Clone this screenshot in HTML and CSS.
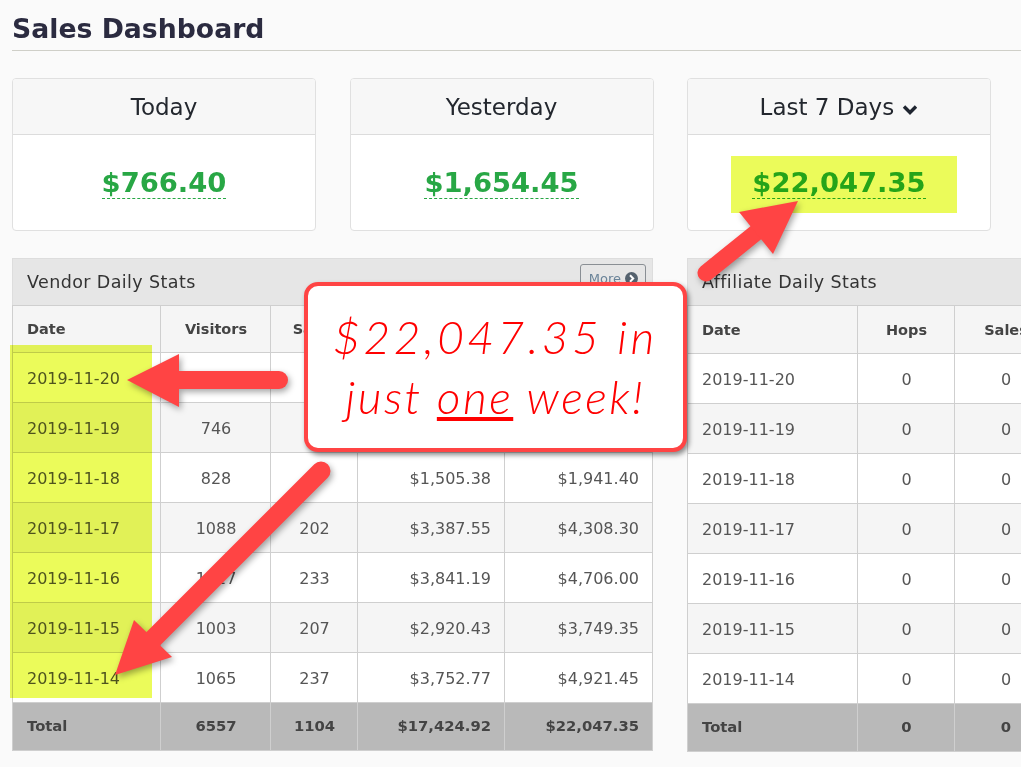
FILE: index.html
```html
<!DOCTYPE html>
<html lang="en">
<head>
    <meta charset="UTF-8">
    <title>Sales Dashboard</title>
    <link rel="stylesheet" href="styles.css">
</head>
<body>
    <h1 class="page-title">Sales Dashboard</h1>

    <!-- Summary cards -->
    <div class="cards">
        <div class="card">
            <div class="card-header">Today</div>
            <div class="card-body"><span class="amount">$766.40</span></div>
        </div>
        <div class="card">
            <div class="card-header">Yesterday</div>
            <div class="card-body"><span class="amount">$1,654.45</span></div>
        </div>
        <div class="card">
            <div class="card-header">Last 7 Days
                <svg class="chevron" width="16" height="11" viewBox="0 0 16 11"><path d="M2 2.5l6 6 6-6" fill="none" stroke="#1f2530" stroke-width="3.4"/></svg>
            </div>
            <div class="card-body"><span class="amount">$22,047.35</span></div>
        </div>
    </div>

    <!-- Stats tables -->
    <div class="panels">
        <div class="panel">
            <div class="panel-header">
                <span>Vendor Daily Stats</span>
                <span class="more-btn">More
                    <svg width="13" height="13" viewBox="0 0 13 13"><circle cx="6.5" cy="6.5" r="6.5" fill="#55626e"/><path d="M5 3.2l3.2 3.3L5 9.8" fill="none" stroke="#fff" stroke-width="2"/></svg>
                </span>
            </div>
            <table class="stats vendor">
                <colgroup>
                    <col class="v-date"><col class="v-visitors"><col class="v-sales"><col class="v-money"><col class="v-money-last">
                </colgroup>
                <thead>
                    <tr><th class="left">Date</th><th>Visitors</th><th>Sales</th><th></th><th></th></tr>
                </thead>
                <tbody>
                    <tr><td class="left">2019-11-20</td><td></td><td></td><td class="right"></td><td class="right">$766.40</td></tr>
                    <tr><td class="left">2019-11-19</td><td>746</td><td></td><td class="right"></td><td class="right">$1,654.45</td></tr>
                    <tr><td class="left">2019-11-18</td><td>828</td><td></td><td class="right">$1,505.38</td><td class="right">$1,941.40</td></tr>
                    <tr><td class="left">2019-11-17</td><td>1088</td><td>202</td><td class="right">$3,387.55</td><td class="right">$4,308.30</td></tr>
                    <tr><td class="left">2019-11-16</td><td>1127</td><td>233</td><td class="right">$3,841.19</td><td class="right">$4,706.00</td></tr>
                    <tr><td class="left">2019-11-15</td><td>1003</td><td>207</td><td class="right">$2,920.43</td><td class="right">$3,749.35</td></tr>
                    <tr><td class="left">2019-11-14</td><td>1065</td><td>237</td><td class="right">$3,752.77</td><td class="right">$4,921.45</td></tr>
                </tbody>
                <tfoot>
                    <tr><td class="left">Total</td><td>6557</td><td>1104</td><td class="right">$17,424.92</td><td class="right">$22,047.35</td></tr>
                </tfoot>
            </table>
        </div>

        <div class="panel">
            <div class="panel-header">
                <span>Affiliate Daily Stats</span>
            </div>
            <table class="stats affiliate">
                <colgroup>
                    <col class="a-date"><col class="a-hops"><col class="a-sales"><col class="a-money"><col class="a-money">
                </colgroup>
                <thead>
                    <tr><th class="left">Date</th><th>Hops</th><th>Sales</th><th></th><th></th></tr>
                </thead>
                <tbody>
                    <tr><td class="left">2019-11-20</td><td>0</td><td>0</td><td></td><td></td></tr>
                    <tr><td class="left">2019-11-19</td><td>0</td><td>0</td><td></td><td></td></tr>
                    <tr><td class="left">2019-11-18</td><td>0</td><td>0</td><td></td><td></td></tr>
                    <tr><td class="left">2019-11-17</td><td>0</td><td>0</td><td></td><td></td></tr>
                    <tr><td class="left">2019-11-16</td><td>0</td><td>0</td><td></td><td></td></tr>
                    <tr><td class="left">2019-11-15</td><td>0</td><td>0</td><td></td><td></td></tr>
                    <tr><td class="left">2019-11-14</td><td>0</td><td>0</td><td></td><td></td></tr>
                </tbody>
                <tfoot>
                    <tr><td class="left">Total</td><td>0</td><td>0</td><td></td><td></td></tr>
                </tfoot>
            </table>
        </div>
    </div>

    <!-- Annotations drawn over the page -->
    <div class="marker marker-dates"></div>
    <div class="marker marker-total"></div>

    <svg class="arrows" width="1021" height="767" viewBox="0 0 1021 767">
        <g fill="#ff4444" stroke="#ff4444" stroke-linecap="round">
            <line x1="706" y1="273" x2="758" y2="231" stroke-width="17"/>
            <polygon points="798,201 739,212 773,254" stroke="none"/>
            <line x1="279" y1="380" x2="175" y2="380" stroke-width="18"/>
            <polygon points="127,380 179,354 179,407" stroke="none"/>
            <line x1="321" y1="471" x2="150" y2="642" stroke-width="19"/>
            <polygon points="115,675 134,620 172,657" stroke="none"/>
        </g>
    </svg>

    <div class="callout">
        <div class="callout-line first">$22,047.35 in</div>
        <div class="callout-line">just <u>one</u> week!</div>
    </div>
</body>
</html>
```

FILE: styles.css
```css
html, body {
    overflow: hidden;
}

body {
    position: relative;
    width: 1021px;
    height: 767px;
    margin: 0;
    padding: 0 0 0 12px;
    box-sizing: border-box;
    background-color: #fafafa;
    font-family: "DejaVu Sans", Verdana, sans-serif;
    color: #555;
}

.page-title {
    margin: 0;
    height: 50px;
    line-height: 58px;
    font-size: 26.7px;
    font-weight: bold;
    color: #2b2b40;
    border-bottom: 1px solid #cfcfc8;
}

.cards {
    display: flex;
    gap: 33.5px;
    margin-top: 27px;
}

.card {
    width: 304px;
    height: 153px;
    box-sizing: border-box;
    background: white;
    border: 1px solid #e0e0e0;
    border-radius: 4px;
    overflow: hidden;
}

.card-header {
    height: 55px;
    line-height: 56px;
    text-align: center;
    font-size: 23px;
    color: #23272e;
    background-color: #f7f7f7;
    border-bottom: 1px solid #dcdcdc;
}

.chevron {
    margin-left: 1px;
}

.card-body {
    padding-top: 32px;
    text-align: center;
}

.amount {
    display: inline-block;
    font-size: 27.4px;
    line-height: 31px;
    font-weight: bold;
    color: #28a745;
    border-bottom: 1px dashed #28a745;
}

.panels {
    display: flex;
    gap: 34px;
    margin-top: 27px;
}

.panel {
    flex: 0 0 641px;
    min-width: 0;
}

.panel-header {
    display: flex;
    justify-content: space-between;
    align-items: center;
    height: 46px;
    padding: 0 6px 0 14px;
    font-size: 17.5px;
    letter-spacing: 0.4px;
    color: #333;
    background-color: #e6e6e6;
    border: 1px solid #ddd;
    border-bottom: none;
}

.more-btn {
    display: flex;
    align-items: center;
    gap: 4px;
    height: 26px;
    padding: 0 7px 0 8px;
    margin-top: -8px;
    font-size: 13px;
    letter-spacing: 0;
    color: #6b8499;
    border: 1px solid #8a8f94;
    border-radius: 3px;
}

.stats {
    width: 641px;
    table-layout: fixed;
    border-collapse: collapse;
    font-size: 16px;
}

.stats th, .stats td {
    border: 1px solid #cfcfcf;
    padding: 1px 13px 0 14px;
    text-align: center;
}

.stats th {
    height: 46px;
    padding-top: 0;
    font-size: 14.5px;
    color: #444;
    background-color: #f5f5f5;
}

.affiliate th {
    height: 47px;
}

.stats td {
    height: 48px;
}

.stats .left {
    text-align: left;
}

.stats .right {
    text-align: right;
}

.stats tbody tr:nth-child(odd) td {
    background: white;
}

.stats tbody tr:nth-child(even) td {
    background: #f5f5f5;
}

.stats tfoot td {
    height: 45px;
    padding-top: 0;
    padding-bottom: 2px;
    font-size: 14.8px;
    font-weight: bold;
    color: #444;
    background-color: #b9b9b9;
}

.v-date { width: 148px; }
.v-visitors { width: 110px; }
.v-sales { width: 87px; }
.v-money { width: 147px; }
.v-money-last { width: 148px; }

.a-date { width: 170px; }
.a-hops { width: 97px; }
.a-sales { width: 102px; }
.a-money { width: 135.5px; }

.marker {
    position: absolute;
    background-color: #ebfb5a;
    mix-blend-mode: multiply;
}

.marker-dates {
    left: 10px;
    top: 345px;
    width: 142px;
    height: 353px;
}

.marker-total {
    left: 731px;
    top: 156px;
    width: 226px;
    height: 57px;
}

.arrows {
    position: absolute;
    left: 0;
    top: 0;
    filter: drop-shadow(2px 3px 3px rgba(0, 0, 0, 0.35));
}

.callout {
    position: absolute;
    left: 304px;
    top: 282px;
    width: 383px;
    height: 170px;
    box-sizing: border-box;
    padding-top: 21px;
    text-align: center;
    font-family: "Lato", "Liberation Serif", serif;
    font-style: italic;
    font-weight: 300;
    font-size: 46px;
    line-height: 60px;
    letter-spacing: 2.5px;
    color: #ff0000;
    background: white;
    border: 4px solid #ff4444;
    border-radius: 14px;
    box-shadow: 2px 3px 5px rgba(0, 0, 0, 0.45);
}

.callout-line.first {
    letter-spacing: 3.5px;
}
```
